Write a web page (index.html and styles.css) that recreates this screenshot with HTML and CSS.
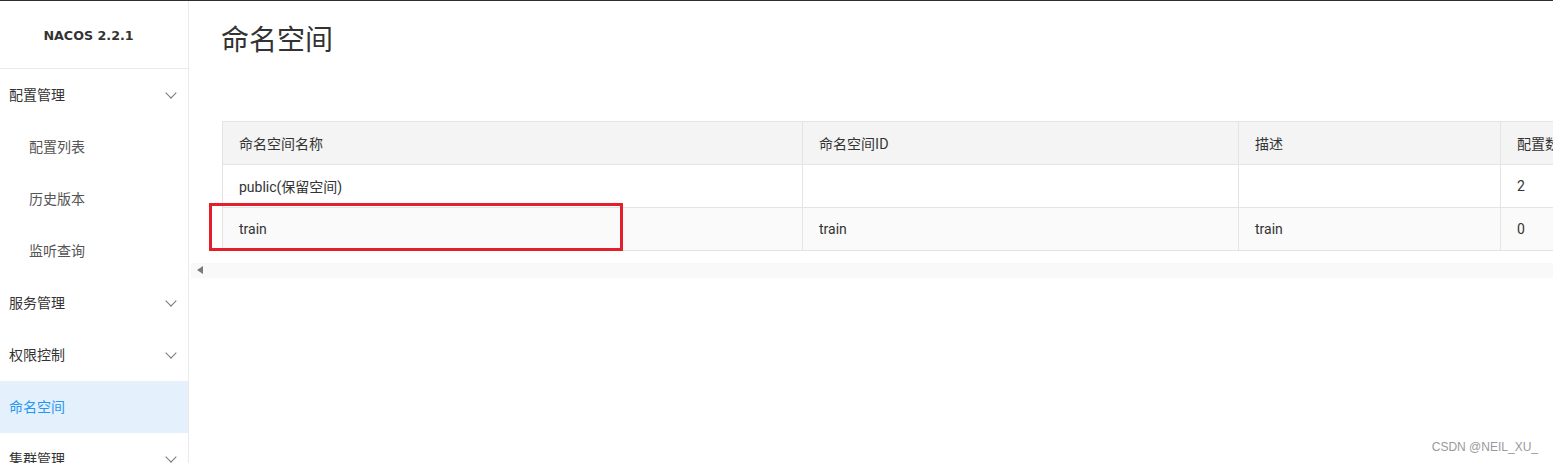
FILE: index.html
```html
<!DOCTYPE html>
<html lang="zh-CN">
<head>
<meta charset="utf-8">
<title>Nacos - 命名空间</title>
<link rel="stylesheet" href="styles.css">
</head>
<body>
<div class="app">
  <aside class="sidebar">
    <div class="brand">NACOS 2.2.1</div>
    <nav class="menu">
      <div class="menu-item top">配置管理<span class="chev"></span></div>
      <div class="menu-item sub">配置列表</div>
      <div class="menu-item sub">历史版本</div>
      <div class="menu-item sub">监听查询</div>
      <div class="menu-item top">服务管理<span class="chev"></span></div>
      <div class="menu-item top">权限控制<span class="chev"></span></div>
      <div class="menu-item top active">命名空间</div>
      <div class="menu-item top">集群管理<span class="chev"></span></div>
    </nav>
  </aside>
  <main class="main">
    <h1 class="title">命名空间</h1>
    <div class="table-area">
      <div class="table-wrap">
        <table class="ns-table">
          <thead>
            <tr>
              <th class="c1">命名空间名称</th>
              <th class="c2">命名空间ID</th>
              <th class="c3">描述</th>
              <th class="c4">配置数</th>
            </tr>
          </thead>
          <tbody>
            <tr>
              <td>public(保留空间)</td>
              <td></td>
              <td></td>
              <td>2</td>
            </tr>
            <tr class="hover">
              <td>train</td>
              <td>train</td>
              <td>train</td>
              <td>0</td>
            </tr>
          </tbody>
        </table>
        <div class="highlight"></div>
      </div>
      <div class="hscroll"><span class="arrow"></span></div>
    </div>
  </main>
</div>
<div class="watermark">CSDN @NEIL_XU_</div>
</body>
</html>
```

FILE: styles.css
```css
html, body {
  margin: 0;
  padding: 0;
  background: #fff;
  overflow: hidden;
}
body {
  font-family: Roboto, "Noto Sans CJK SC", sans-serif;
  color: #333;
  font-size: 14px;
  border-top: 1px solid #2b2f33;
  height: 462px;
  position: relative;
}
.app {
  display: flex;
  height: 100%;
}
.sidebar {
  width: 188px;
  flex: none;
  border-right: 1px solid #eaeaea;
  overflow: hidden;
}
.brand {
  height: 67px;
  border-bottom: 1px solid #eaeaea;
  display: flex;
  align-items: center;
  justify-content: center;
  padding-right: 11px;
  padding-top: 1px;
  box-sizing: border-box;
  height: 68px;
  font-family: "DejaVu Sans", sans-serif;
  font-weight: bold;
  font-size: 12.7px;
  color: #333;
}
.menu-item {
  height: 52px;
  box-sizing: border-box;
  padding-bottom: 3px;
  display: flex;
  align-items: center;
  font-family: "Noto Sans CJK SC", sans-serif;
  font-size: 14px;
  position: relative;
}
.menu-item.top {
  padding-left: 9px;
  color: #333;
}
.menu-item.sub {
  padding-left: 29px;
  color: #555;
}
.menu-item.active {
  background: #e4f1fc;
  color: #2496f3;
}
.chev {
  position: absolute;
  left: 167px;
  top: 50%;
  width: 7px;
  height: 7px;
  margin-top: -6px;
  border-right: 1px solid #777;
  border-bottom: 1px solid #777;
  transform: rotate(45deg);
}
.main {
  flex: 1;
  min-width: 0;
  position: relative;
}
.title {
  margin: 0;
  padding: 17px 0 0 32px;
  height: 43px;
  font-family: "Noto Sans CJK SC", sans-serif;
  font-weight: normal;
  font-size: 28px;
  line-height: 40px;
  color: #333;
}
.table-area {
  padding-top: 60px;
}
.table-wrap {
  position: relative;
  padding-left: 33px;
}
.ns-table {
  border-collapse: collapse;
  table-layout: fixed;
  width: 1500px;
}
.ns-table th, .ns-table td {
  height: 42px;
  padding: 0 0 0 16px;
  text-align: left;
  border: 1px solid #e4e4e4;
  font-weight: normal;
  font-size: 14px;
  color: #333;
  white-space: nowrap;
  overflow: hidden;
}
.ns-table th {
  background: #f4f4f4;
  font-family: "Noto Sans CJK SC", sans-serif;
}
.ns-table .c1 { width: 563px; }
.ns-table .c2 { width: 419px; }
.ns-table .c3 { width: 245px; }
.ns-table .c4 { width: 257px; }
.ns-table tr.hover td {
  background: #fafafa;
}
.highlight {
  position: absolute;
  left: 20px;
  top: 82px;
  width: 408px;
  height: 42px;
  border: 3px solid #e2202c;
}
.hscroll {
  margin: 12px 0 0 2px;
  height: 15px;
  background: #f9f9f9;
  position: relative;
}
.arrow {
  position: absolute;
  left: 6px;
  top: 3px;
  width: 0;
  height: 0;
  border-top: 4px solid transparent;
  border-bottom: 4px solid transparent;
  border-right: 6px solid #7a7a7a;
}
.watermark {
  position: absolute;
  right: 15px;
  bottom: 9px;
  font-family: "Liberation Sans", sans-serif;
  font-size: 12px;
  color: #9a9a9a;
}
```
